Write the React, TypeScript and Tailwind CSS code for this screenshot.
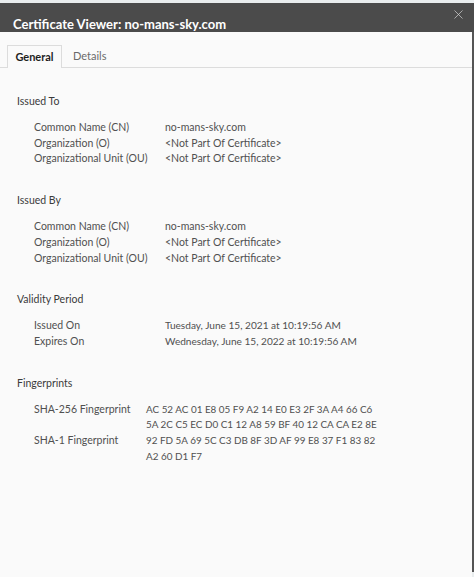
import { X } from 'lucide-react';

interface Row {
  label: string;
  value: string[];
}

interface Section {
  title: string;
  rows: Row[];
  valueCol: string;
  valueSize: string;
}

const NOT_PART = '<Not Part Of Certificate>';

const sections: Section[] = [
  {
    title: 'Issued To',
    valueCol: 'w-[131px]',
    valueSize: 'text-[10.5px]',
    rows: [
      { label: 'Common Name (CN)', value: ['no-mans-sky.com'] },
      { label: 'Organization (O)', value: [NOT_PART] },
      { label: 'Organizational Unit (OU)', value: [NOT_PART] },
    ],
  },
  {
    title: 'Issued By',
    valueCol: 'w-[131px]',
    valueSize: 'text-[10.5px]',
    rows: [
      { label: 'Common Name (CN)', value: ['no-mans-sky.com'] },
      { label: 'Organization (O)', value: [NOT_PART] },
      { label: 'Organizational Unit (OU)', value: [NOT_PART] },
    ],
  },
  {
    title: 'Validity Period',
    valueCol: 'w-[131px]',
    valueSize: 'text-[10.1px]',
    rows: [
      { label: 'Issued On', value: ['Tuesday, June 15, 2021 at 10:19:56 AM'] },
      { label: 'Expires On', value: ['Wednesday, June 15, 2022 at 10:19:56 AM'] },
    ],
  },
  {
    title: 'Fingerprints',
    valueCol: 'w-[112px]',
    valueSize: 'text-[9.9px]',
    rows: [
      {
        label: 'SHA-256 Fingerprint',
        value: ['AC 52 AC 01 E8 05 F9 A2 14 E0 E3 2F 3A A4 66 C6', '5A 2C C5 EC D0 C1 12 A8 59 BF 40 12 CA CA E2 8E'],
      },
      {
        label: 'SHA-1 Fingerprint',
        value: ['92 FD 5A 69 5C C3 DB 8F 3D AF 99 E8 37 F1 83 82', 'A2 60 D1 F7'],
      },
    ],
  },
];

const CertSection = ({ title, rows, valueCol, valueSize }: Section) => (
  <div className="flex flex-col">
    <div className="h-[16px] leading-[16px] text-[#3a3a3a]">{title}</div>
    <div className="mt-[11px] pl-[17px] flex flex-col">
      {rows.map((row) => (
        <div key={row.label} className="flex">
          <div className={`${valueCol} shrink-0 leading-[15.7px]`}>{row.label}</div>
          <div className={`flex flex-col ${valueSize}`}>
            {row.value.map((line) => (
              <div key={line} className="leading-[15.7px] whitespace-nowrap">
                {line}
              </div>
            ))}
          </div>
        </div>
      ))}
    </div>
  </div>
);

export default function App() {
  return (
    <div
      className="w-[474px] h-[577px] bg-[#e9edee] pt-[3px] flex flex-col overflow-hidden"
      style={{ fontFamily: 'Lato, "Open Sans", sans-serif' }}
    >
      <div className="h-[29px] bg-[#4b4b4b] flex items-end pl-[13px] relative overflow-hidden">
        <span className="text-white text-[13px] font-bold leading-[16px]">
          Certificate Viewer: no-mans-sky.com
        </span>
        <X className="absolute right-[8px] top-[4px] text-[#d8d8d8]" size={15} strokeWidth={1.1} />
      </div>

      <div className="flex-1 flex">
        <div className="flex-1 bg-[#fafafa] flex flex-col text-[10.5px] text-[#505050]">
          <div className="mt-[13px] flex items-end border-b border-[#dcdcdc] pl-[7px] h-[23px]">
            <div className="h-[23px] w-[55px] border border-b-0 border-[#dcdcdc] bg-[#fafafa] -mb-px flex items-center justify-center font-bold text-[11px] text-[#1e1e1e]">
              General
            </div>
            <div className="h-[22px] pl-[11px] flex items-center text-[11px] text-[#6a6a6a]">Details</div>
          </div>

          <div className="pl-[17px] pt-[25px] flex flex-col gap-[25px]">
            {sections.map((s) => (
              <CertSection key={s.title} {...s} />
            ))}
          </div>
        </div>
        <div className="w-[2px] bg-[#555555] mb-[5px]" />
      </div>
    </div>
  );
}
